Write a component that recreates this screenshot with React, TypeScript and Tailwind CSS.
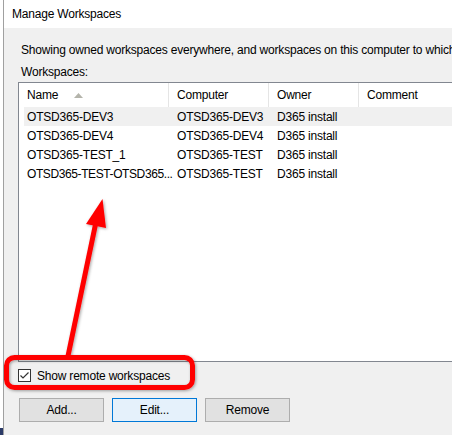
import React from "react";

const rows = [
  { name: "OTSD365-DEV3", computer: "OTSD365-DEV3", owner: "D365 install", selected: true },
  { name: "OTSD365-DEV4", computer: "OTSD365-DEV4", owner: "D365 install" },
  { name: "OTSD365-TEST_1", computer: "OTSD365-TEST", owner: "D365 install" },
  { name: "OTSD365-TEST-OTSD365...", computer: "OTSD365-TEST", owner: "D365 install", tight: true },
];

const Button: React.FC<{ label: string; focused?: boolean }> = ({ label, focused }) => (
  <button
    className={
      "w-[85px] h-[24px] border text-[12px] text-black " +
      (focused ? "bg-[#e5f1fb] border-[#0078d7]" : "bg-[#e1e1e1] border-[#adadad]")
    }
  >
    {label}
  </button>
);

export default function App() {
  return (
    <div
      className="relative w-[452px] h-[435px] overflow-hidden bg-white flex text-[12px] tracking-[-0.2px] text-black"
      style={{ fontFamily: '"Liberation Sans", Arial, sans-serif' }}
    >
      {/* window edge */}
      <div className="w-[3px] flex flex-col">
        <div className="flex-1 bg-white" />
        <div className="h-[7px] bg-[#2b3a67]" />
      </div>
      <div className="w-px bg-[#a0a0a0]" />

      <div className="flex-1 flex flex-col min-w-0">
        <div className="h-[28px] bg-white flex items-center pl-[8px] shrink-0">Manage Workspaces</div>

        <div className="flex-1 bg-[#f0f0f0] pl-[14px] flex flex-col min-w-0 overflow-hidden">
          <p className="mt-[14px] h-[16px] leading-[16px] pl-[3px] whitespace-nowrap overflow-hidden">
            Showing owned workspaces everywhere, and workspaces on this computer to which you have access
          </p>
          <p className="mt-[6px] h-[16px] leading-[16px] pl-[3px]">Workspaces:</p>

          {/* list view */}
          <div className="mt-[2px] h-[280px] border-t border-l border-b border-[#828790] bg-white flex flex-col">
            <div className="h-[24px] grid grid-cols-[150px_100px_90px_1fr] items-stretch">
              <div className="border-r border-[#e5e5e5] pl-[8px] flex items-center gap-[16px]">
                <span>Name</span>
                <svg width="9" height="5" viewBox="0 0 9 5">
                  <polygon points="4.5,0 9,5 0,5" fill="#b4b4ab" />
                </svg>
              </div>
              <div className="border-r border-[#e5e5e5] pl-[8px] flex items-center">Computer</div>
              <div className="border-r border-[#e5e5e5] pl-[8px] flex items-center">Owner</div>
              <div className="pl-[8px] flex items-center">Comment</div>
            </div>
            {rows.map((r) => (
              <div
                key={r.name}
                className={
                  "ml-[5px] h-[19px] grid grid-cols-[145px_100px_90px_1fr] items-center " +
                  (r.selected ? "bg-[#f0f0f0]" : "")
                }
              >
                <span className={"pl-[3px] whitespace-nowrap " + (r.tight ? "tracking-[-0.4px]" : "")}>
                  {r.name}
                </span>
                <span className="pl-[8px] whitespace-nowrap">{r.computer}</span>
                <span className="pl-[8px] whitespace-nowrap">{r.owner}</span>
                <span />
              </div>
            ))}
          </div>

          <label className="mt-[7px] h-[13px] flex items-center gap-[6px]">
            <span className="w-[13px] h-[13px] border border-[#333333] bg-white flex items-center justify-center">
              <svg width="11" height="11" viewBox="0 0 11 11">
                <polyline points="1.5,5.5 4,8 9.5,2.5" fill="none" stroke="#333333" strokeWidth="1.2" />
              </svg>
            </span>
            <span>Show remote workspaces</span>
          </label>

          <div className="mt-[16px] flex gap-[8px] pl-px">
            <Button label="Add..." />
            <Button label="Edit..." focused />
            <Button label="Remove" />
          </div>
        </div>
      </div>

      {/* red annotation */}
      <svg className="absolute inset-0 pointer-events-none" width="452" height="435" viewBox="0 0 452 435">
        <defs>
          <filter id="sh" x="-20%" y="-20%" width="140%" height="140%">
            <feDropShadow dx="1" dy="1" stdDeviation="1.5" floodColor="#000" floodOpacity="0.35" />
          </filter>
        </defs>
        <g filter="url(#sh)">
          <rect x="6.5" y="357.5" width="186" height="30" rx="8" fill="none" stroke="#ff0000" strokeWidth="5" />
          <line x1="68" y1="356" x2="96" y2="222" stroke="#ff0000" strokeWidth="5" />
          <polygon points="102.5,199 86,224 106,228" fill="#ff0000" />
        </g>
      </svg>
    </div>
  );
}
